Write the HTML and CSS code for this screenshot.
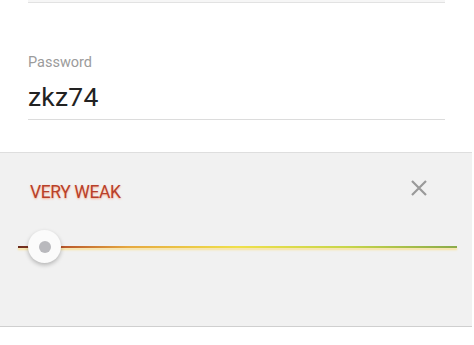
FILE: index.html
```html
<!DOCTYPE html>
<html>
<head>
<meta charset="utf-8">
<link rel="stylesheet" href="styles.css">
</head>
<body>
<div class="form">
  <div class="field prev"></div>
  <div class="field pw">
    <div class="label">Password</div>
    <div class="value">zkz74</div>
  </div>
</div>
<div class="panel">
  <div class="head">
    <span class="strength">VERY WEAK</span>
    <svg class="close" width="18" height="18" viewBox="0 0 18 18"><path d="M2 2 L16 16 M16 2 L2 16" stroke="#9a9a9a" stroke-width="2.2" fill="none"/></svg>
  </div>
  <div class="slider">
    <div class="track"></div>
    <div class="thumb"><div class="dot"></div></div>
  </div>
</div>
</body>
</html>
```
FILE: styles.css
```css
html, body { margin: 0; padding: 0; background: #fff; }
body { font-family: Roboto, "Noto Sans", sans-serif; width: 474px; height: 345px; overflow: hidden; }
.form { padding: 0 29px 0 28px; }
.prev { height: 2px; border-bottom: 1px solid #e2e2e2; background: #f6f6f6; }
.pw { padding-top: 50px; border-bottom: 1px solid #dcdcdc; padding-bottom: 7px; }
.label { font-size: 14.5px; color: #9b9b9b; line-height: 20px; }
.value { font-size: 26.5px; color: #222; line-height: 31px; margin-top: 8px; letter-spacing: 0.2px; }
.panel { margin-top: 32px; margin-right: 2px; background: #f1f1f1; border-top: 1px solid #dedede; border-bottom: 1px solid #cfcfcf; height: 173px; display: flex; flex-direction: column; }
.head { display: flex; justify-content: space-between; align-items: center; padding: 28px 44px 0 30px; }
.strength { font-size: 17.5px; color: #b8402a; text-shadow: 0 1px 2px rgba(255, 130, 80, 0.6); letter-spacing: -0.4px; line-height: 22px; }
.close { display: block; margin-top: -9px; }
.slider { position: relative; margin: 43px 15px 0 18px; height: 4px; }
.track { height: 2px; background: linear-gradient(to right, #6b2a1c 0%, #b8562a 10%, #e6a840 25%, #efe04a 50%, #c7d64a 75%, #8bab4a 100%); box-shadow: 0 2px 2px rgba(255, 215, 90, 0.6); }
.thumb { position: absolute; left: 10px; top: -16px; width: 33px; height: 33px; border-radius: 50%; background: #fbfbfb; box-shadow: 0 2px 4px rgba(0,0,0,0.25); display: flex; align-items: center; justify-content: center; }
.dot { width: 12px; height: 12px; border-radius: 50%; background: #b9b9bd; }
```
